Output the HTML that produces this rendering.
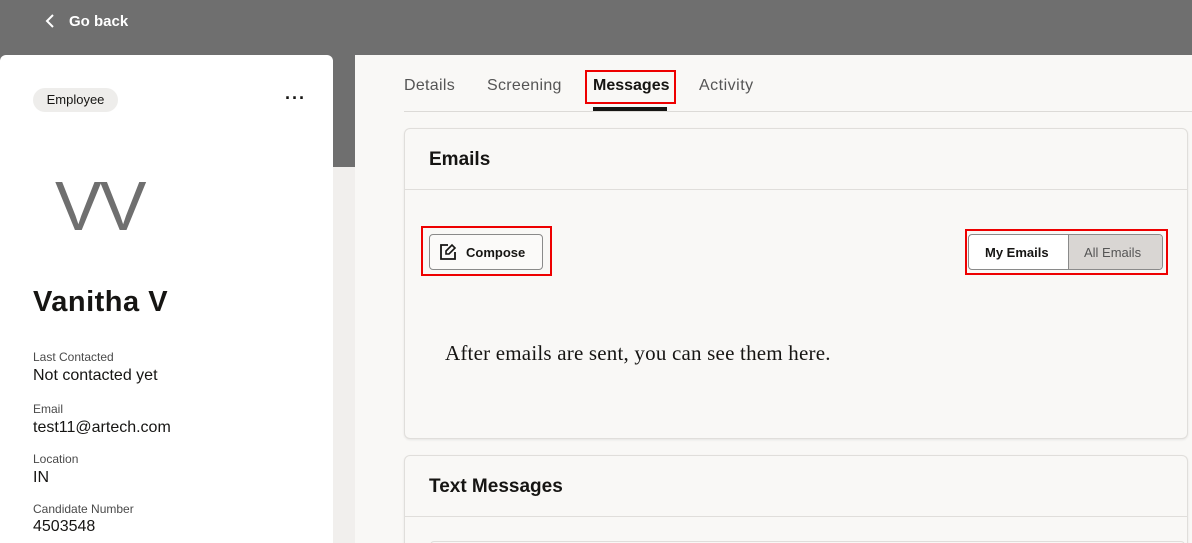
<!DOCTYPE html>
<html style="width:1192px;height:543px;overflow:hidden"><head><style>
*{box-sizing:border-box;margin:0;padding:0}
body{width:1192px;height:543px;overflow:hidden;background:#f1efed;font-family:"Liberation Sans",sans-serif;position:relative;color:#161513}
.abs{position:absolute}
.top{left:0;top:0;width:1192px;height:55px;background:#6f6f6f}
.gray2{left:0;top:55px;width:356px;height:112px;background:#6f6f6f}
.card{left:0;top:55px;width:333px;height:488px;background:#fff;border-radius:6px 6px 0 0}
.right{left:355px;top:55px;width:837px;height:488px;background:#f9f8f6}
.lbl{font-size:12px;color:#4a4a4a}
.val{font-size:16px;color:#161513}
.panel{background:#f9f8f6;border:1px solid #e0dedb;border-radius:6px;box-shadow:0 1px 2px rgba(0,0,0,.08)}
.red{border:2px solid #e00}
</style></head><body>
<div class="abs top"></div>
<div class="abs gray2"></div>
<svg class="abs" style="left:44px;top:13px" width="12" height="16"><path d="M9 2 L3 8 L9 14" stroke="#fff" stroke-width="2" fill="none"/></svg>
<div class="abs" style="left:69px;top:13px;color:#fff;font-weight:bold;font-size:15px">Go back</div>
<div class="abs card"></div>
<div class="abs" style="left:33px;top:88px;width:85px;height:24px;background:#eeedeb;border-radius:12px;font-size:13px;line-height:24px;text-align:center">Employee</div>
<div class="abs" style="left:285px;top:88px;font-size:18px;font-weight:bold;letter-spacing:1px">···</div>
<div class="abs" style="left:55px;top:166px;font-size:70px;color:#6f6f6f;letter-spacing:-2px;line-height:80px">VV</div>
<div class="abs" style="left:33px;top:286px;font-size:29px;font-weight:bold;letter-spacing:0.5px">Vanitha V</div>
<div class="abs lbl" style="left:33px;top:350px">Last Contacted</div>
<div class="abs val" style="left:33px;top:367px">Not contacted yet</div>
<div class="abs lbl" style="left:33px;top:402px">Email</div>
<div class="abs val" style="left:33px;top:419px">test11@artech.com</div>
<div class="abs lbl" style="left:33px;top:452px">Location</div>
<div class="abs val" style="left:33px;top:469px">IN</div>
<div class="abs lbl" style="left:33px;top:502px">Candidate Number</div>
<div class="abs val" style="left:33px;top:518px">4503548</div>
<div class="abs right"></div>
<div class="abs" style="left:404px;top:111px;width:788px;height:1px;background:#dcdad7"></div>
<div class="abs" style="left:404px;top:77px;font-size:16px;color:#555;letter-spacing:0.3px">Details</div>
<div class="abs" style="left:487px;top:77px;font-size:16px;color:#555;letter-spacing:0.3px">Screening</div>
<div class="abs" style="left:593px;top:77px;font-size:16px;font-weight:bold">Messages</div>
<div class="abs red" style="left:585px;top:70px;width:91px;height:34px"></div>
<div class="abs" style="left:593px;top:107px;width:74px;height:4px;background:#161513"></div>
<div class="abs" style="left:699px;top:77px;font-size:16px;color:#555;letter-spacing:0.5px">Activity</div>
<div class="abs panel" style="left:404px;top:128px;width:784px;height:311px"></div>
<div class="abs" style="left:405px;top:189px;width:782px;height:1px;background:#e0dedb"></div>
<div class="abs" style="left:429px;top:149px;font-size:19px;font-weight:bold">Emails</div>
<div class="abs red" style="left:421px;top:226px;width:131px;height:50px"></div>
<div class="abs" style="left:429px;top:234px;width:114px;height:36px;border:1px solid #8a8a8a;border-radius:4px;background:#fbfaf9"></div>
<svg class="abs" style="left:439px;top:243px" width="18" height="18"><path d="M9 2 H2 V16 H16 V9" stroke="#161513" stroke-width="1.8" fill="none"/><path d="M7 11 L7 8 L13 2 L16 5 L10 11 Z" stroke="#161513" stroke-width="1.6" fill="none"/></svg>
<div class="abs" style="left:466px;top:245px;font-size:13px;font-weight:bold">Compose</div>
<div class="abs red" style="left:965px;top:229px;width:203px;height:46px"></div>
<div class="abs" style="left:968px;top:234px;width:195px;height:36px;border:1px solid #8a8a8a;border-radius:4px;background:#fff;overflow:hidden">
<div class="abs" style="left:99px;top:0;width:96px;height:36px;background:#d9d6d3;border-left:1px solid #8a8a8a"></div>
<div class="abs" style="left:16px;top:10px;font-size:13px;font-weight:bold">My Emails</div>
<div class="abs" style="left:115px;top:10px;font-size:13px;color:#555">All Emails</div>
</div>
<div class="abs" style="left:445px;top:341px;font-family:'Liberation Serif',serif;font-size:21px;letter-spacing:0.2px">After emails are sent, you can see them here.</div>
<div class="abs panel" style="left:404px;top:455px;width:784px;height:100px;border-bottom:none"></div>
<div class="abs" style="left:405px;top:516px;width:782px;height:1px;background:#e0dedb"></div>
<div class="abs" style="left:429px;top:476px;font-size:19px;font-weight:bold">Text Messages</div>
<div class="abs" style="left:430px;top:541px;width:755px;height:10px;border:1px solid #e0dedb;border-radius:4px"></div>
</body></html>
